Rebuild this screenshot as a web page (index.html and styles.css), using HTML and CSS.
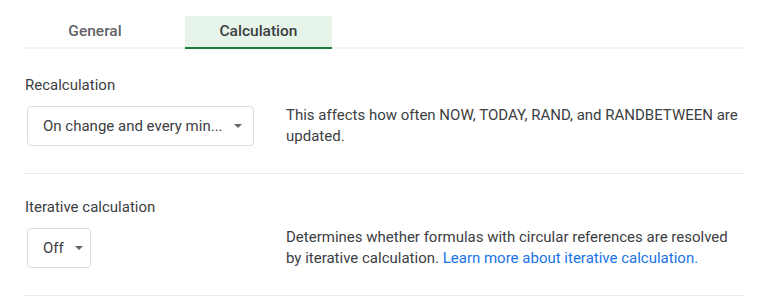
FILE: index.html
```html
<!DOCTYPE html>
<html lang="en">

<head>
    <meta charset="UTF-8">
    <meta name="viewport" content="width=device-width, initial-scale=1.0">
    <title>Settings</title>
    <link rel="stylesheet" href="styles.css">
</head>

<body>
    <div class="settings">
        <div class="tabs">
            <div class="tab tab-general">General</div>
            <div class="tab tab-calc active">Calculation</div>
        </div>

        <div class="section">
            <div class="label">Recalculation</div>
            <div class="row">
                <div class="control">
                    <div class="dropdown dropdown-wide">
                        <span class="dropdown-text">On change and every min...</span>
                        <span class="arrow"></span>
                    </div>
                </div>
                <div class="desc">This affects how often NOW, TODAY, RAND, and RANDBETWEEN are updated.</div>
            </div>
        </div>

        <div class="section">
            <div class="label">Iterative calculation</div>
            <div class="row">
                <div class="control">
                    <div class="dropdown">
                        <span class="dropdown-text">Off</span>
                        <span class="arrow"></span>
                    </div>
                </div>
                <div class="desc">Determines whether formulas with circular references are resolved<br>
                    by iterative calculation. <a href="#">Learn more about iterative calculation.</a></div>
            </div>
        </div>
    </div>
</body>

</html>
```

FILE: styles.css
```css
body {
    margin: 0;
    background: #fff;
    font-family: Roboto, "Liberation Sans", Arial, sans-serif;
    color: #3c4043;
}

.settings {
    margin-left: 22px;
    width: 724px;
}

.tabs {
    display: flex;
    margin-top: 16px;
    border-bottom: 2px solid #f1f3f4;
}

.tab {
    height: 31px;
    line-height: 31px;
    text-align: center;
    font-size: 15.5px;
    font-weight: 500;
    color: #5f6368;
    margin-bottom: -2px;
    border-bottom: 2px solid transparent;
    box-sizing: content-box;
}

.tab-general {
    width: 146px;
    padding-right: 17px;
}

.tab-calc {
    width: 147px;
}

.tab.active {
    background: #e6f4ea;
    color: #3c4043;
    border-bottom-color: #188038;
}

.section {
    padding: 26px 0 26px 3px;
    margin: 0 2px 0 1px;
    border-bottom: 1px solid #e8eaed;
}

.section + .section {
    padding-top: 23px;
}

.label {
    font-size: 15px;
    line-height: 20px;
    color: #3c4043;
    margin-left: -1px;
}

.row {
    display: grid;
    grid-template-columns: 261px 1fr;
    align-items: center;
    margin-top: 10px;
}

.dropdown {
    display: inline-flex;
    align-items: center;
    height: 38px;
    padding: 0 7px 0 15px;
    margin-left: 1px;
    border: 1px solid #dadce0;
    border-radius: 4px;
    font-size: 15px;
    color: #3c4043;
    box-sizing: content-box;
}

.dropdown-wide {
    width: 203px;
    padding-right: 7px;
}

.dropdown-text {
    flex: 1;
    white-space: nowrap;
}

.dropdown-wide .arrow {
    margin-right: 4px;
}

.arrow {
    width: 0;
    height: 0;
    margin-left: 11px;
    border-left: 4px solid transparent;
    border-right: 4px solid transparent;
    border-top: 4px solid #5f6368;
}

.desc {
    font-size: 15px;
    line-height: 21px;
    color: #3c4043;
    width: 460px;
    margin-left: -1px;
}

.desc a {
    color: #1a73e8;
    text-decoration: none;
}
```
